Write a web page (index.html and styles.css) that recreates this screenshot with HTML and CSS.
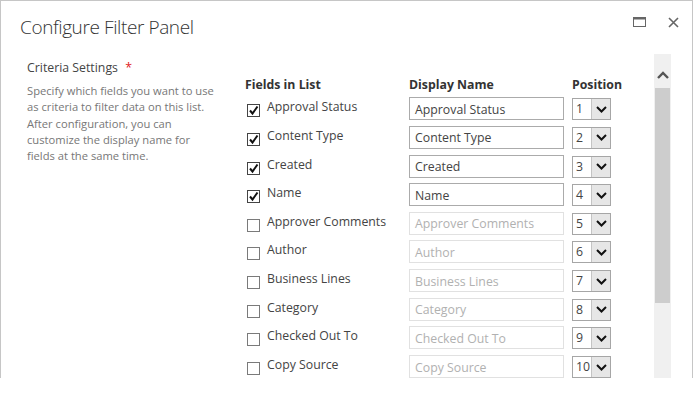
FILE: index.html
```html
<!DOCTYPE html>
<html lang="en">
<head>
<meta charset="utf-8">
<title>Configure Filter Panel</title>
<link rel="stylesheet" href="styles.css">
</head>
<body>
<div class="dialog">
  <header class="titlebar">
    <h1 class="title">Configure Filter Panel</h1>
    <div class="actions">
      <span class="icon"><svg width="13" height="10" viewBox="0 0 13 10"><rect x="0.5" y="0.5" width="12" height="9" fill="none" stroke="#666" stroke-width="1"/><rect x="0" y="0" width="13" height="2.5" fill="#666"/></svg></span>
      <span class="icon"><svg width="11" height="11" viewBox="0 0 11 11"><path d="M1 1 L10 10 M10 1 L1 10" stroke="#666" stroke-width="1.6" fill="none"/></svg></span>
    </div>
  </header>
  <div class="body">
    <div class="content">
      <section class="intro">
        <div class="intro-title">Criteria Settings <span class="req">*</span></div>
        <p class="intro-desc">Specify which fields you want to use<br>as criteria to filter data on this list.<br>After configuration, you can<br>customize the display name for<br>fields at the same time.</p>
      </section>
      <div class="fields">
        <div class="hdr">Fields in List</div>
        <div class="hdr">Display Name</div>
        <div class="hdr">Position</div>

        <div class="field"><span class="cb checked"><svg width="11" height="11" viewBox="0 0 11 11"><path d="M2 5.5 L4.5 8.5 L9.5 1.5" stroke="#111" stroke-width="2" fill="none"/></svg></span><span class="lbl">Approval Status</span></div>
        <div class="name"><span class="inp">Approval Status</span></div>
        <div class="pos"><span class="sel"><span class="num">1</span><span class="btn"><svg width="11" height="7" viewBox="0 0 11 7"><path d="M1 1 L5.5 5.5 L10 1" stroke="#111" stroke-width="2" fill="none"/></svg></span></span></div>

        <div class="field"><span class="cb checked"><svg width="11" height="11" viewBox="0 0 11 11"><path d="M2 5.5 L4.5 8.5 L9.5 1.5" stroke="#111" stroke-width="2" fill="none"/></svg></span><span class="lbl">Content Type</span></div>
        <div class="name"><span class="inp">Content Type</span></div>
        <div class="pos"><span class="sel"><span class="num">2</span><span class="btn"><svg width="11" height="7" viewBox="0 0 11 7"><path d="M1 1 L5.5 5.5 L10 1" stroke="#111" stroke-width="2" fill="none"/></svg></span></span></div>

        <div class="field"><span class="cb checked"><svg width="11" height="11" viewBox="0 0 11 11"><path d="M2 5.5 L4.5 8.5 L9.5 1.5" stroke="#111" stroke-width="2" fill="none"/></svg></span><span class="lbl">Created</span></div>
        <div class="name"><span class="inp">Created</span></div>
        <div class="pos"><span class="sel"><span class="num">3</span><span class="btn"><svg width="11" height="7" viewBox="0 0 11 7"><path d="M1 1 L5.5 5.5 L10 1" stroke="#111" stroke-width="2" fill="none"/></svg></span></span></div>

        <div class="field"><span class="cb checked"><svg width="11" height="11" viewBox="0 0 11 11"><path d="M2 5.5 L4.5 8.5 L9.5 1.5" stroke="#111" stroke-width="2" fill="none"/></svg></span><span class="lbl">Name</span></div>
        <div class="name"><span class="inp">Name</span></div>
        <div class="pos"><span class="sel"><span class="num">4</span><span class="btn"><svg width="11" height="7" viewBox="0 0 11 7"><path d="M1 1 L5.5 5.5 L10 1" stroke="#111" stroke-width="2" fill="none"/></svg></span></span></div>

        <div class="field"><span class="cb"></span><span class="lbl">Approver Comments</span></div>
        <div class="name"><span class="inp off">Approver Comments</span></div>
        <div class="pos"><span class="sel"><span class="num">5</span><span class="btn"><svg width="11" height="7" viewBox="0 0 11 7"><path d="M1 1 L5.5 5.5 L10 1" stroke="#111" stroke-width="2" fill="none"/></svg></span></span></div>

        <div class="field"><span class="cb"></span><span class="lbl">Author</span></div>
        <div class="name"><span class="inp off">Author</span></div>
        <div class="pos"><span class="sel"><span class="num">6</span><span class="btn"><svg width="11" height="7" viewBox="0 0 11 7"><path d="M1 1 L5.5 5.5 L10 1" stroke="#111" stroke-width="2" fill="none"/></svg></span></span></div>

        <div class="field"><span class="cb"></span><span class="lbl">Business Lines</span></div>
        <div class="name"><span class="inp off">Business Lines</span></div>
        <div class="pos"><span class="sel"><span class="num">7</span><span class="btn"><svg width="11" height="7" viewBox="0 0 11 7"><path d="M1 1 L5.5 5.5 L10 1" stroke="#111" stroke-width="2" fill="none"/></svg></span></span></div>

        <div class="field"><span class="cb"></span><span class="lbl">Category</span></div>
        <div class="name"><span class="inp off">Category</span></div>
        <div class="pos"><span class="sel"><span class="num">8</span><span class="btn"><svg width="11" height="7" viewBox="0 0 11 7"><path d="M1 1 L5.5 5.5 L10 1" stroke="#111" stroke-width="2" fill="none"/></svg></span></span></div>

        <div class="field"><span class="cb"></span><span class="lbl">Checked Out To</span></div>
        <div class="name"><span class="inp off">Checked Out To</span></div>
        <div class="pos"><span class="sel"><span class="num">9</span><span class="btn"><svg width="11" height="7" viewBox="0 0 11 7"><path d="M1 1 L5.5 5.5 L10 1" stroke="#111" stroke-width="2" fill="none"/></svg></span></span></div>

        <div class="field"><span class="cb"></span><span class="lbl">Copy Source</span></div>
        <div class="name"><span class="inp off">Copy Source</span></div>
        <div class="pos"><span class="sel"><span class="num">10</span><span class="btn"><svg width="11" height="7" viewBox="0 0 11 7"><path d="M1 1 L5.5 5.5 L10 1" stroke="#111" stroke-width="2" fill="none"/></svg></span></span></div>
      </div>
    </div>
    <div class="scrollbar">
      <div class="sb-up"><svg width="12" height="8" viewBox="0 0 12 8"><path d="M1 7 L6 2 L11 7" stroke="#555" stroke-width="2.4" fill="none"/></svg></div>
      <div class="sb-thumb"></div>
    </div>
  </div>
</div>
</body>
</html>
```

FILE: styles.css
```css
html, body {
  margin: 0;
  padding: 0;
  background: #fff;
}
body {
  font-family: "Open Sans", "Noto Sans", "Liberation Sans", sans-serif;
  color: #444;
}
.dialog {
  box-sizing: border-box;
  width: 693px;
  height: 378px;
  border: 1px solid #c6c6c6;
  border-bottom: none;
  display: flex;
  flex-direction: column;
  overflow: hidden;
}
.titlebar {
  height: 53px;
  flex: none;
  display: flex;
  align-items: flex-start;
}
.title {
  flex: 1;
  margin: 13px 0 0 19px;
  font-weight: 300;
  font-size: 19px;
  line-height: 27px;
  letter-spacing: -0.4px;
  color: #333;
}
.actions {
  flex: none;
  display: flex;
  gap: 10px;
  margin-top: 9px;
  margin-right: 7px;
}
.icon {
  width: 24px;
  height: 24px;
  display: flex;
  align-items: center;
  justify-content: center;
}
.icon svg { display: block; }
.body {
  flex: 1;
  display: flex;
  min-height: 0;
  padding-right: 21px;
}
.content {
  flex: 1;
  display: flex;
  overflow: hidden;
  padding-left: 26px;
}
.intro {
  width: 218px;
  flex: none;
  padding-top: 5px;
}
.intro-title {
  font-size: 12.3px;
  line-height: 18px;
  color: #444;
}
.req {
  color: #e0201b;
  margin-left: 4px;
}
.intro-desc {
  margin: 6px 0 0;
  font-size: 11.2px;
  line-height: 16.3px;
  color: #777;
}
.fields {
  display: grid;
  grid-template-columns: 164px 163px 40px;
  grid-template-rows: 21.2px;
  grid-auto-rows: 28.67px;
  padding-top: 22px;
  align-content: start;
}
.hdr {
  font-weight: 700;
  font-size: 12.3px;
  line-height: 18px;
  color: #333;
}
.field {
  display: flex;
  align-items: flex-start;
}
.cb {
  box-sizing: border-box;
  width: 13px;
  height: 13px;
  margin: 7px 0 0 2px;
  border: 1px solid #7a7a7a;
  flex: none;
  display: flex;
  align-items: center;
  justify-content: center;
}
.cb.checked { border-color: #444; }
.cb svg { display: block; }
.lbl {
  margin: 1px 0 0 7px;
  font-size: 12.3px;
  line-height: 18px;
  color: #444;
  white-space: nowrap;
}
.inp {
  box-sizing: border-box;
  display: flex;
  align-items: center;
  width: 155px;
  height: 23px;
  padding: 1px 0 0 5px;
  border: 1px solid #ababab;
  font-size: 12.3px;
  color: #444;
  white-space: nowrap;
}
.inp.off {
  border-color: #e1e1e1;
  color: #b1b1b1;
}
.sel {
  box-sizing: border-box;
  display: flex;
  width: 39px;
  height: 22px;
  margin-top: 1px;
  border: 1px solid #a6a6a6;
}
.num {
  width: 18px;
  padding-left: 3px;
  box-sizing: border-box;
  font-size: 12.3px;
  line-height: 20px;
  color: #444;
}
.btn {
  flex: 1;
  background: #e6e6e6;
  border-left: 1px solid #c4c4c4;
  display: flex;
  align-items: center;
  justify-content: center;
}
.btn svg { display: block; }
.scrollbar {
  width: 17px;
  flex: none;
  background: #f0f0f0;
  display: flex;
  flex-direction: column;
  align-items: center;
}
.sb-up {
  height: 34px;
  display: flex;
  align-items: flex-start;
  justify-content: center;
}
.sb-up svg { margin-top: 17px; display: block; }
.sb-thumb {
  width: 15px;
  height: 215px;
  background: #cdcdcd;
}
```
